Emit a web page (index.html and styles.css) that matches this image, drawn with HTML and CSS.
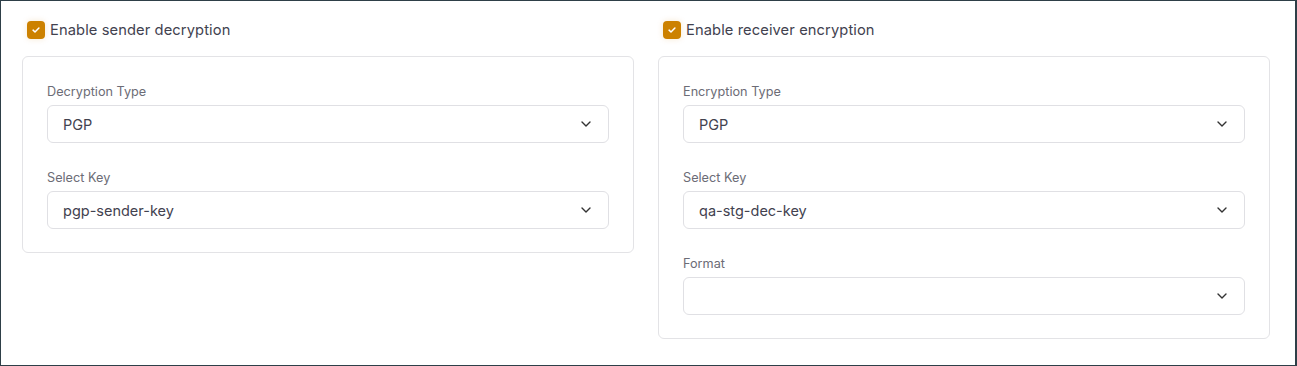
FILE: index.html
```html
<!doctype html>
<html lang="en">
  <head>
    <meta charset="UTF-8" />
    <title>Encryption Settings</title>
    <link rel="stylesheet" href="styles.css">
  </head>
  <body>
    <div class="frame">
      <div class="columns">
        <section class="column">
          <label class="check">
            <span class="check-box">
              <svg viewBox="0 0 12 12" width="10" height="10"><path d="M2.5 6.2l2.3 2.2 4.7-4.8" fill="none" stroke="#fff" stroke-width="1.8" stroke-linecap="round" stroke-linejoin="round"/></svg>
            </span>
            Enable sender decryption
          </label>
          <div class="card">
            <div class="form-group">
              <div class="form-label">Decryption Type</div>
              <div class="select">
                <span>PGP</span>
                <svg class="chevron" viewBox="0 0 10 6" width="10" height="6"><path d="M1 1l4 4 4-4" fill="none" stroke="#333" stroke-width="1.4" stroke-linecap="round" stroke-linejoin="round"/></svg>
              </div>
            </div>
            <div class="form-group">
              <div class="form-label">Select Key</div>
              <div class="select">
                <span>pgp-sender-key</span>
                <svg class="chevron" viewBox="0 0 10 6" width="10" height="6"><path d="M1 1l4 4 4-4" fill="none" stroke="#333" stroke-width="1.4" stroke-linecap="round" stroke-linejoin="round"/></svg>
              </div>
            </div>
          </div>
        </section>

        <section class="column">
          <label class="check">
            <span class="check-box">
              <svg viewBox="0 0 12 12" width="10" height="10"><path d="M2.5 6.2l2.3 2.2 4.7-4.8" fill="none" stroke="#fff" stroke-width="1.8" stroke-linecap="round" stroke-linejoin="round"/></svg>
            </span>
            Enable receiver encryption
          </label>
          <div class="card">
            <div class="form-group">
              <div class="form-label">Encryption Type</div>
              <div class="select">
                <span>PGP</span>
                <svg class="chevron" viewBox="0 0 10 6" width="10" height="6"><path d="M1 1l4 4 4-4" fill="none" stroke="#333" stroke-width="1.4" stroke-linecap="round" stroke-linejoin="round"/></svg>
              </div>
            </div>
            <div class="form-group">
              <div class="form-label">Select Key</div>
              <div class="select">
                <span>qa-stg-dec-key</span>
                <svg class="chevron" viewBox="0 0 10 6" width="10" height="6"><path d="M1 1l4 4 4-4" fill="none" stroke="#333" stroke-width="1.4" stroke-linecap="round" stroke-linejoin="round"/></svg>
              </div>
            </div>
            <div class="form-group">
              <div class="form-label">Format</div>
              <div class="select">
                <span></span>
                <svg class="chevron" viewBox="0 0 10 6" width="10" height="6"><path d="M1 1l4 4 4-4" fill="none" stroke="#333" stroke-width="1.4" stroke-linecap="round" stroke-linejoin="round"/></svg>
              </div>
            </div>
          </div>
        </section>
      </div>
    </div>
  </body>
</html>
```

FILE: styles.css
```css
* {
  margin: 0;
  padding: 0;
  box-sizing: border-box;
}

body {
  font-family: "Inter", "Liberation Sans", sans-serif;
  background: #fff;
  color: #42424f;
  -webkit-font-smoothing: antialiased;
}

.frame {
  width: 1297px;
  height: 366px;
  border: 1px solid #2e3f48;
  border-right-width: 2px;
  padding: 20px 25px 0 21px;
}

.columns {
  display: grid;
  grid-template-columns: 612px 612px;
  column-gap: 24px;
  align-items: start;
}

.check {
  display: flex;
  align-items: center;
  gap: 5px;
  height: 18px;
  margin-left: 5px;
  font-size: 14.7px;
  color: #42424f;
  letter-spacing: 0.1px;
}

.check-box {
  width: 18px;
  height: 18px;
  border-radius: 4px;
  background: #cc8100;
  box-shadow: 0 0 6px rgba(204, 129, 0, 0.18);
  display: flex;
  align-items: center;
  justify-content: center;
}

.card {
  margin-top: 17px;
  border: 1px solid #e3e3e6;
  border-radius: 6px;
  padding: 27px 24px 23px;
  display: flex;
  flex-direction: column;
  gap: 27px;
}

.form-label {
  font-size: 12.7px;
  color: #6c6c76;
  margin-bottom: 5px;
  line-height: 16px;
}

.select {
  height: 38px;
  border: 1px solid #e0e0e4;
  border-radius: 6px;
  display: flex;
  align-items: center;
  justify-content: space-between;
  padding: 0 17px 0 15px;
  font-size: 14.5px;
  color: #42424f;
}

.chevron {
  flex-shrink: 0;
}
```
